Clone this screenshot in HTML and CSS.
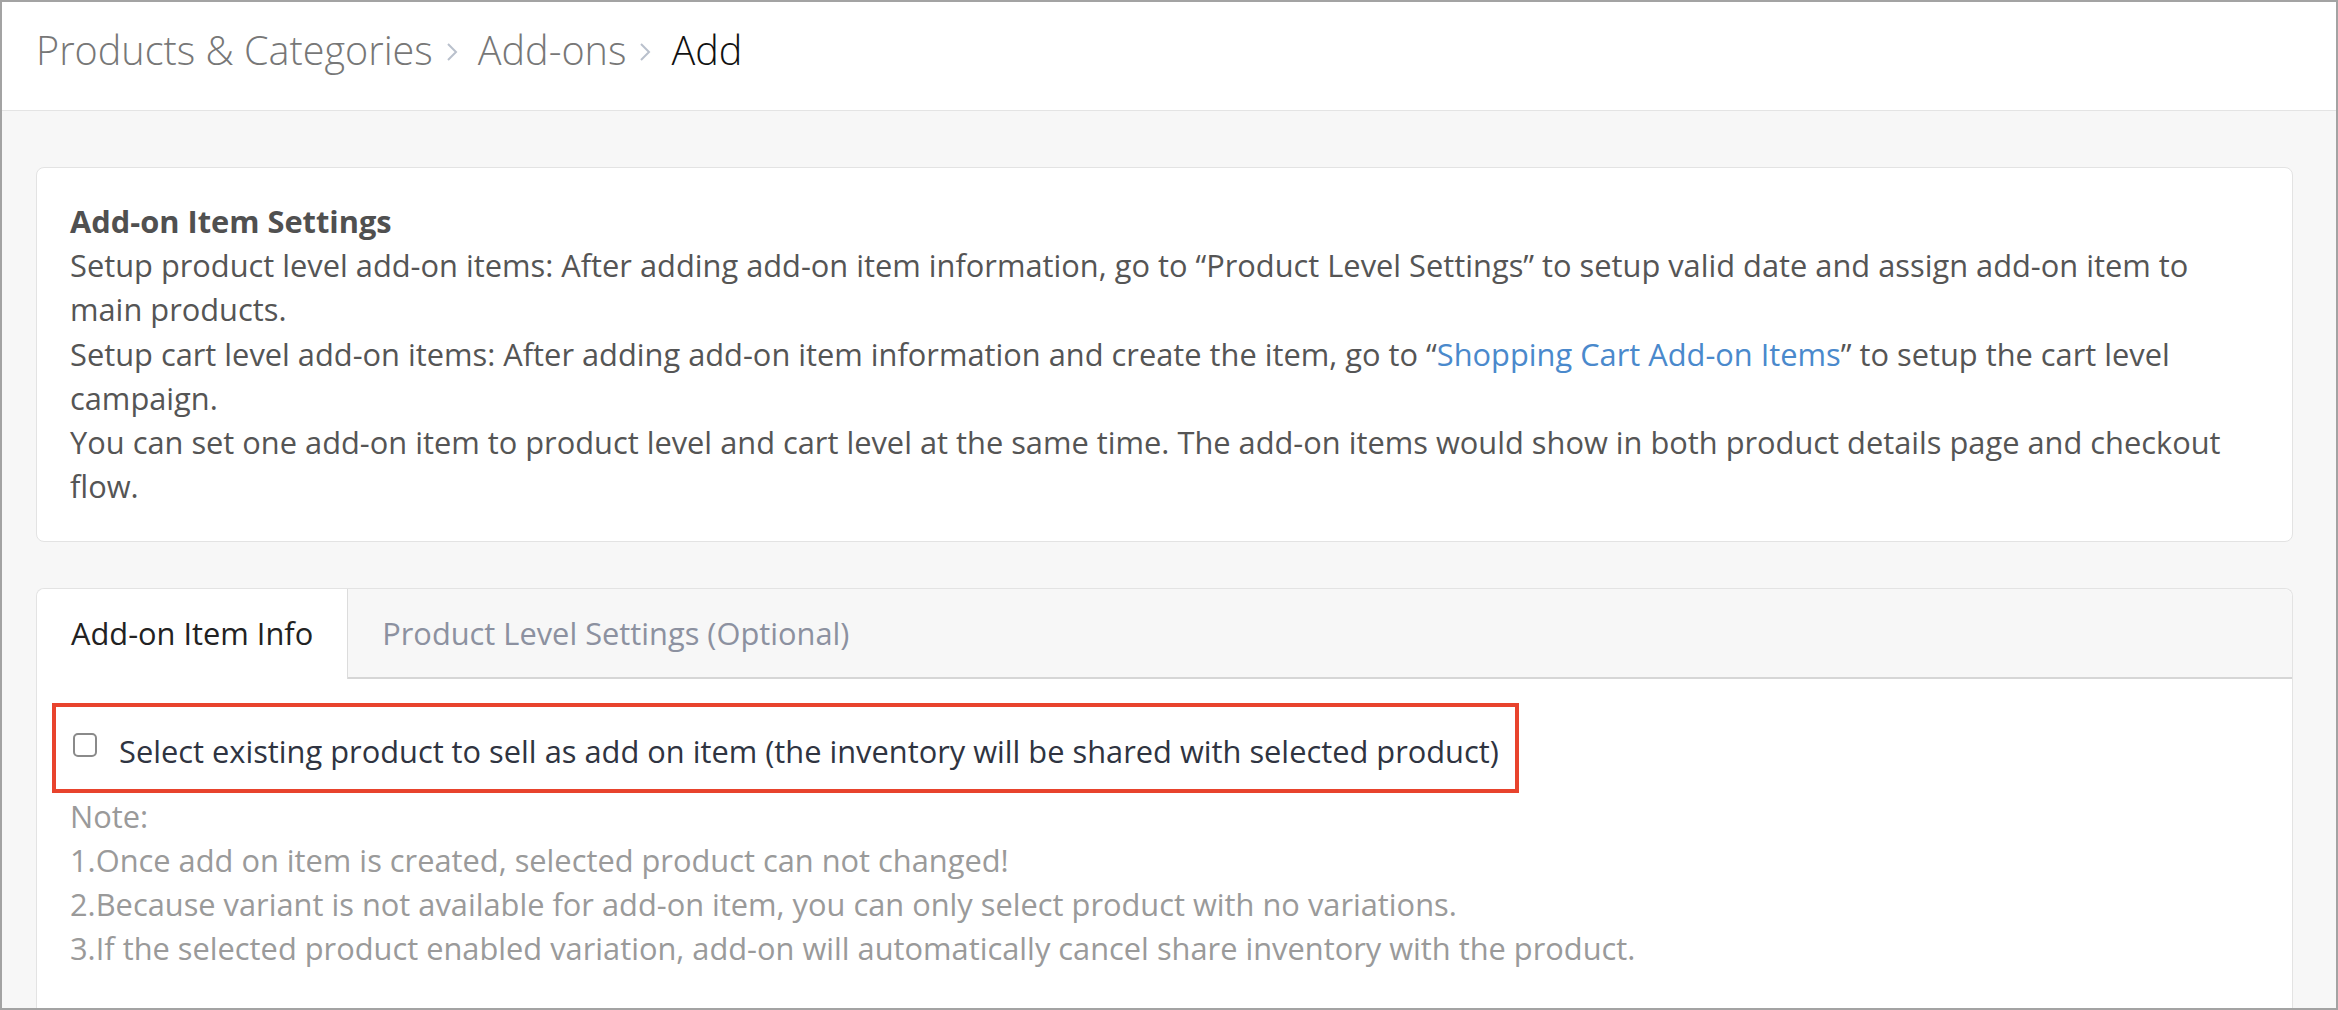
FILE: index.html
```html
<!DOCTYPE html>
<html lang="en">
<head>
  <meta charset="UTF-8">
  <meta name="viewport" content="width=device-width, initial-scale=1">
  <title>Add-ons - Add</title>
  <link rel="stylesheet" href="styles.css">
</head>
<body>

<div class="frame">

  <div class="topbar">
    <nav class="crumbs">
      <span class="crumb">Products &amp; Categories</span>
      <svg class="sep" width="14" height="22" viewBox="0 0 14 22"><path d="M3 3 L11 11 L3 19" fill="none" stroke="#b9c0cc" stroke-width="2"/></svg>
      <span class="crumb">Add-ons</span>
      <svg class="sep" width="14" height="22" viewBox="0 0 14 22"><path d="M3 3 L11 11 L3 19" fill="none" stroke="#b9c0cc" stroke-width="2"/></svg>
      <span class="crumb current">Add</span>
    </nav>
  </div>

  <div class="main">

    <div class="card info">
      <strong class="info-title">Add-on Item Settings</strong>
      <p>Setup product level add-on items: After adding add-on item information, go to “Product Level Settings” to setup valid date and assign add-on item to main products.</p>
      <p>Setup cart level add-on items: After adding add-on item information and create the item, go to “<a href="#">Shopping Cart Add-on Items</a>” to setup the cart level campaign.</p>
      <p>You can set one add-on item to product level and cart level at the same time. The add-on items would show in both product details page and checkout flow.</p>
    </div>

    <div class="card tabs-card">
      <div class="tabs">
        <div class="tab active">Add-on Item Info</div>
        <div class="tab">Product Level Settings (Optional)</div>
      </div>

      <div class="pane">
        <label class="share-box">
          <input type="checkbox" class="check">
          <span>Select existing product to sell as add on item (the inventory will be shared with selected product)</span>
        </label>

        <div class="notes">
          <div>Note:</div>
          <div>1.Once add on item is created, selected product can not changed!</div>
          <div>2.Because variant is not available for add-on item, you can only select product with no variations.</div>
          <div>3.If the selected product enabled variation, add-on will automatically cancel share inventory with the product.</div>
        </div>
      </div>
    </div>

  </div>
</div>

</body>
</html>
```

FILE: styles.css
```css
/* base */
body {
  margin: 0;
  font-family: "Open Sans", "Liberation Sans", sans-serif;
  font-size: 30.8px;
  line-height: 44.2px;
  color: #555;
}
.frame {
  height: 1010px;
  box-sizing: border-box;
  border: 2px solid #a3a3a3;
  display: flex;
  flex-direction: column;
  overflow: hidden;
  background-color: #f7f7f7;
}

/* breadcrumb bar */
.topbar {
  height: 109px;
  box-sizing: border-box;
  background-color: #fff;
  border-bottom: 1px solid #e4e4e4;
  padding: 26px 0 0 34px;
}
.crumbs {
  display: flex;
  align-items: center;
  font-size: 39.6px;
  line-height: 44px;
  font-weight: 300;
}
.crumb {
  color: #777;
}
.crumb.current {
  color: #111;
}
.sep {
  margin: 4px 19px 0 12px;
}

/* content */
.main {
  flex: 1;
  padding: 56px 43px 0 34px;
  overflow: hidden;
}
.card {
  background-color: #fff;
  border: 1px solid #e3e3e3;
  border-radius: 8px;
}
.info {
  padding: 31px 34px 33px 33px;
}
.info-title {
  display: block;
  font-weight: bold;
  color: #505050;
}
.info p {
  margin: 0;
}
.info a {
  color: #4a89cc;
  text-decoration: none;
}

.tabs-card {
  margin-top: 46px;
  border-bottom: none;
  border-radius: 8px 8px 0 0;
  padding-bottom: 200px;
}
.tabs {
  display: flex;
  background-color: #f7f7f7;
  border-bottom: 2px solid #d6d6d6;
  border-radius: 8px 8px 0 0;
}
.tab {
  padding: 22px 34px 21px;
  color: #8c91a0;
}
.tab.active {
  background-color: #fff;
  color: #222;
  border-right: 1px solid #dcdcdc;
  border-radius: 8px 0 0 0;
  margin-bottom: -2px;
  padding-bottom: 23px;
}

.pane {
  padding: 24px 34px 0 15px;
}
.share-box {
  display: inline-flex;
  align-items: flex-start;
  border: 4px solid #e8432d;
  padding: 22px 16px 16px 17px;
  color: #2f3441;
}
.check {
  appearance: none;
  width: 24px;
  height: 24px;
  margin: 4px 22px 0 0;
  border: 2px solid #8a8a8a;
  border-radius: 5px;
  background-color: #fff;
  flex-shrink: 0;
}
.notes {
  padding: 1px 0 0 18px;
  color: #9a9a9a;
}
```
